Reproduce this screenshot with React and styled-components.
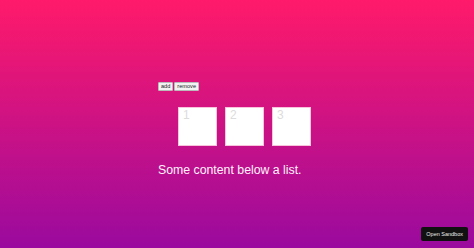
import { useState } from 'react';
import styled, { createGlobalStyle } from 'styled-components';

const GlobalStyle = createGlobalStyle`
  html, body {
    margin: 0;
    padding: 0;
    height: 100%;
  }
  body {
    font-family: "Liberation Sans", Arial, sans-serif;
  }
`;

function App() {
  const [items, setItems] = useState([1, 2, 3]);

  const addItem = () => setItems(prev => [...prev, prev.length + 1]);
  const removeItem = () => setItems(prev => prev.slice(0, -1));

  return (
    <Page>
      <GlobalStyle />
      <Content>
        <Controls>
          <SmallButton onClick={addItem}>add</SmallButton>
          <SmallButton onClick={removeItem}>remove</SmallButton>
        </Controls>
        <List>
          {items.map(n => (
            <Tile key={n}>{n}</Tile>
          ))}
        </List>
        <Caption>Some content below a list.</Caption>
      </Content>
      <SandboxButton>Open Sandbox</SandboxButton>
    </Page>
  );
}

export default App;

const Page = styled.div`
  position: relative;
  width: 100%;
  height: 248px;
  overflow: hidden;
  background: linear-gradient(to bottom, #ff1a6a 0%, #9a0a9e 100%);
`;

const Content = styled.div`
  display: flex;
  flex-direction: column;
  align-items: flex-start;
  padding: 82px 0 0 158px;
`;

const Controls = styled.div`
  display: flex;
  gap: 1px;
`;

const SmallButton = styled.button`
  height: 9px;
  padding: 0 2px;
  margin: 0;
  font-family: "Liberation Sans", Arial, sans-serif;
  font-size: 5.6px;
  line-height: 7px;
  color: #222;
  background: #f2f2f2;
  border: 1px solid #bbb;
  border-radius: 1px;
  box-sizing: border-box;
  cursor: pointer;
`;

const List = styled.div`
  display: flex;
  gap: 8px;
  margin: 16px 0 0 20px;
`;

const Tile = styled.div`
  width: 39px;
  height: 39px;
  box-sizing: border-box;
  background: #fff;
  border: 1px solid #f7c4dc;
  padding: 1px 0 0 4px;
  font-family: "Liberation Sans", Arial, sans-serif;
  font-size: 12px;
  font-weight: 300;
  line-height: 12px;
  color: #dcdcdc;
`;

const Caption = styled.p`
  margin: 17px 0 0;
  font-family: "Liberation Sans", Arial, sans-serif;
  font-size: 12.3px;
  line-height: 14px;
  color: #fff2f8;
`;

const SandboxButton = styled.button`
  position: absolute;
  right: 6px;
  bottom: 7px;
  height: 14px;
  padding: 0 5px;
  font-family: "Liberation Sans", Arial, sans-serif;
  font-size: 5.5px;
  color: #eee;
  background: #111;
  border: none;
  border-radius: 2px;
  cursor: pointer;
`;
